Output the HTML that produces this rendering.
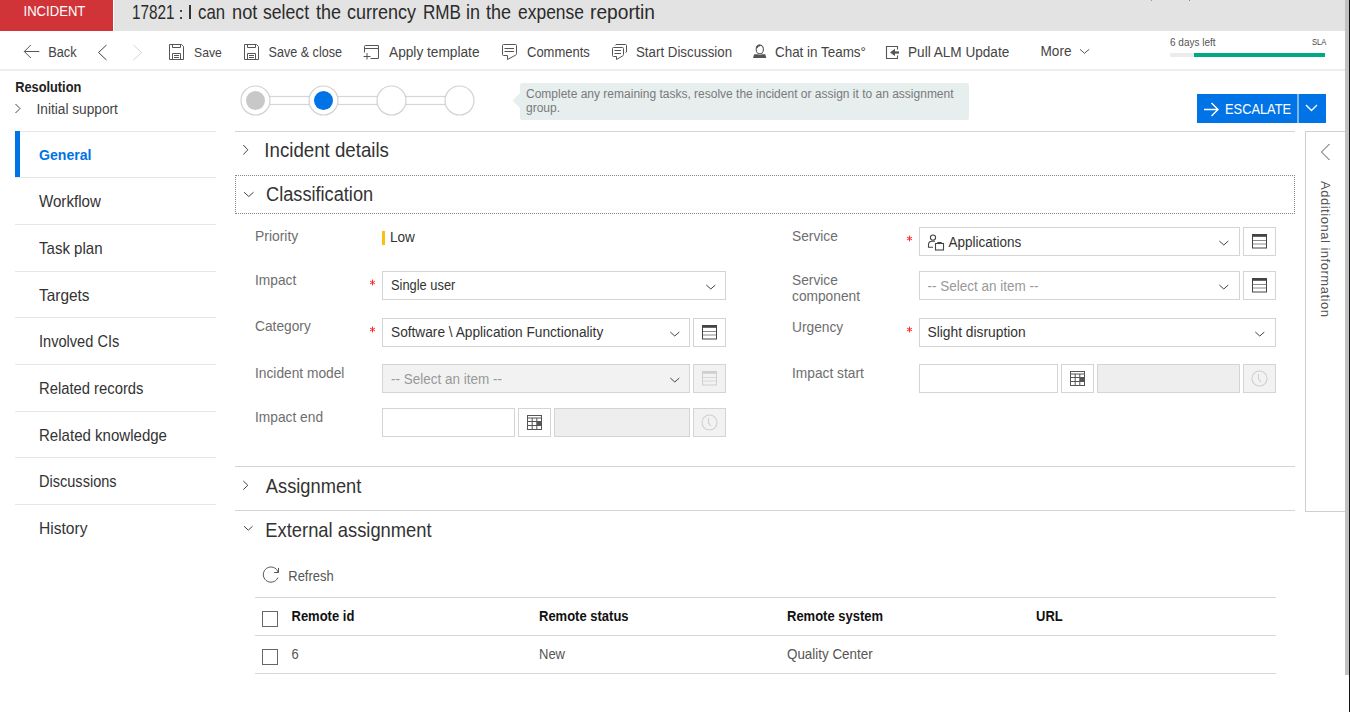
<!DOCTYPE html>
<html><head><meta charset="utf-8"><style>
html,body{margin:0;padding:0;background:#fff;width:1350px;height:712px;overflow:hidden;position:relative}
.t{position:absolute;white-space:nowrap;line-height:normal;font-family:'Liberation Sans', sans-serif}
svg{overflow:visible}
</style></head><body>
<div style="position:absolute;left:0px;top:0px;width:113px;height:31px;background:#d13438"></div>
<div style="position:absolute;left:114px;top:0px;width:1231px;height:31px;background:#e3e3e3"></div>
<div class="t" style="left:23.5px;top:4px;font-size:13.1px;color:#fff;font-weight:normal;transform:scaleY(1.1);transform-origin:0 11px;">INCIDENT</div>
<div class="t" style="left:132.40px;top:3px;font-size:18px;color:#2b2b2b;transform:scale(0.8503,1.1);transform-origin:0.00px 15px;">17821</div>
<div class="t" style="left:198.00px;top:3px;font-size:18px;color:#2b2b2b;transform:scale(0.9310,1.1);transform-origin:0.00px 15px;">can</div>
<div class="t" style="left:231.60px;top:3px;font-size:18px;color:#2b2b2b;transform:scale(1.0160,1.1);transform-origin:0.00px 15px;">not</div>
<div class="t" style="left:263.00px;top:3px;font-size:18px;color:#2b2b2b;transform:scale(0.9787,1.1);transform-origin:0.00px 15px;">select</div>
<div class="t" style="left:316.00px;top:3px;font-size:18px;color:#2b2b2b;transform:scale(1.0000,1.1);transform-origin:0.00px 15px;">the</div>
<div class="t" style="left:347.00px;top:3px;font-size:18px;color:#2b2b2b;transform:scale(1.0000,1.1);transform-origin:0.00px 15px;">currency</div>
<div class="t" style="left:423.00px;top:3px;font-size:18px;color:#2b2b2b;transform:scale(0.9500,1.1);transform-origin:0.00px 15px;">RMB</div>
<div class="t" style="left:466.00px;top:3px;font-size:18px;color:#2b2b2b;transform:scale(1.0000,1.1);transform-origin:0.00px 15px;">in</div>
<div class="t" style="left:486.00px;top:3px;font-size:18px;color:#2b2b2b;transform:scale(1.0000,1.1);transform-origin:0.00px 15px;">the</div>
<div class="t" style="left:518.00px;top:3px;font-size:18px;color:#2b2b2b;transform:scale(0.9692,1.1);transform-origin:0.00px 15px;">expense</div>
<div class="t" style="left:590.00px;top:3px;font-size:18px;color:#2b2b2b;transform:scale(1.0656,1.1);transform-origin:0.00px 15px;">reportin</div>
<div style="position:absolute;left:189px;top:5px;width:2px;height:14px;background:#333"></div>
<div style="position:absolute;left:180px;top:10px;width:2px;height:2px;background:#444"></div>
<div style="position:absolute;left:180px;top:17px;width:2px;height:2px;background:#444"></div>
<div style="position:absolute;left:1345px;top:0px;width:4px;height:675px;background:#c1c1c1"></div>
<div style="position:absolute;left:1349px;top:0px;width:1px;height:712px;background:#111"></div>
<div style="position:absolute;left:1151px;top:0px;width:1px;height:1px;background:#999"></div>
<div style="position:absolute;left:1189px;top:0px;width:1px;height:1px;background:#888"></div>
<div style="position:absolute;left:0px;top:69px;width:1345px;height:2px;background:#eeeeee"></div>
<svg style="position:absolute;left:23px;top:44px;" width="17" height="15" viewBox="0 0 17 15"><path d="M1.3 7.5 H16.3 M7.8 1 L1.3 7.5 L7.8 14" fill="none" stroke="#555" stroke-width="1"/></svg>
<div class="t" style="left:48.2px;top:45px;font-size:12.8px;color:#444;font-weight:normal;transform:scaleY(1.1);transform-origin:0 11px;">Back</div>
<svg style="position:absolute;left:97px;top:44px;" width="11" height="17" viewBox="0 0 11 17"><path d="M9.5 1 L1.5 8.5 L9.5 16" fill="none" stroke="#444" stroke-width="1"/></svg>
<svg style="position:absolute;left:132px;top:44px;" width="11" height="17" viewBox="0 0 11 17"><path d="M1.5 1 L9.5 8.5 L1.5 16" fill="none" stroke="#d4d4d4" stroke-width="1"/></svg>
<svg style="position:absolute;left:168px;top:44px;" width="17" height="17" viewBox="0 0 17 17"><path d="M1.5 0.5 H13.5 L15.5 2.5 V15.5 H1.5 Z" fill="none" stroke="#555" stroke-width="1"/><path d="M4.5 0.5 V3.5 H12.5 V0.5" fill="none" stroke="#555" stroke-width="1"/><path d="M4.5 15.5 V9.5 H12.5 V15.5 M6 11.5 H11 M6 13.5 H11" fill="none" stroke="#555" stroke-width="1"/></svg>
<div class="t" style="left:194px;top:46px;font-size:12.2px;color:#444;font-weight:normal;transform:scaleY(1.1);transform-origin:0 10px;">Save</div>
<svg style="position:absolute;left:243px;top:44px;" width="17" height="17" viewBox="0 0 17 17"><path d="M1.5 0.5 H13.5 L15.5 2.5 V15.5 H1.5 Z" fill="none" stroke="#555" stroke-width="1"/><path d="M4.5 0.5 V3.5 H12.5 V0.5" fill="none" stroke="#555" stroke-width="1"/><path d="M4.5 15.5 V9.5 H12.5 V15.5 M6 11.5 H11 M6 13.5 H11" fill="none" stroke="#555" stroke-width="1"/></svg>
<div class="t" style="left:268.5px;top:46px;font-size:12.6px;color:#444;font-weight:normal;transform:scaleY(1.1);transform-origin:0 10px;">Save &amp; close</div>
<svg style="position:absolute;left:363px;top:45px;" width="17" height="16" viewBox="0 0 17 16"><path d="M1.5 7.5 V1.5 Q1.5 0.5 2.5 0.5 H15.5 V13.5 H7.5" fill="none" stroke="#555" stroke-width="1"/><path d="M1.5 3.5 H15.5" stroke="#555" stroke-width="1"/><path d="M4 8 V14.5 M0.5 11.5 H7.5" stroke="#555" stroke-width="1"/></svg>
<div class="t" style="left:389px;top:45px;font-size:13.7px;color:#444;font-weight:normal;transform:scaleY(1.1);transform-origin:0 11px;">Apply template</div>
<svg style="position:absolute;left:501px;top:44px;" width="17" height="17" viewBox="0 0 17 17"><path d="M2.5 0.5 H14.5 Q15.5 0.5 15.5 1.5 V9.5 Q15.5 10.8 14.5 11.2 L6.5 15.5 V11.5 H2.5 Q1.5 11.5 1.5 10.5 V1.5 Q1.5 0.5 2.5 0.5 Z" fill="none" stroke="#555" stroke-width="1"/><path d="M3.5 4.5 H13 M3.5 7.5 H13" stroke="#555" stroke-width="1"/></svg>
<div class="t" style="left:527px;top:45px;font-size:13px;color:#444;font-weight:normal;transform:scaleY(1.1);transform-origin:0 11px;">Comments</div>
<svg style="position:absolute;left:611px;top:44px;" width="17" height="17" viewBox="0 0 17 17"><path d="M4 1.5 L5 0.5 H14.5 Q15.5 0.5 15.5 1.5 V8 L14.5 8.5" fill="none" stroke="#555" stroke-width="1"/><path d="M1.5 4.5 Q1.5 3.5 2.5 3.5 H11.5 Q12.5 3.5 12.5 4.5 V10.5 Q12.5 11.5 11.5 12 L5.5 15.5 V12.5 H2.5 Q1.5 12.5 1.5 11.5 Z" fill="none" stroke="#555" stroke-width="1"/><path d="M3.5 6.5 H10 M3.5 9.5 H10" stroke="#555" stroke-width="1"/></svg>
<div class="t" style="left:636px;top:45px;font-size:13.3px;color:#444;font-weight:normal;transform:scaleY(1.1);transform-origin:0 11px;">Start Discussion</div>
<svg style="position:absolute;left:752px;top:44px;" width="15" height="16" viewBox="0 0 15 16"><ellipse cx="7.8" cy="5.5" rx="3.6" ry="4.4" fill="none" stroke="#555" stroke-width="1.1"/><path d="M4.6 4 Q5.5 1.3 8 1.3" fill="none" stroke="#555" stroke-width="1.8"/><path d="M1 14 L2.2 10.3 H5.5 L7.8 11 L10 10.3 H13.3 L14.3 14 Z" fill="#555"/></svg>
<div class="t" style="left:775px;top:45px;font-size:13.43px;color:#444;font-weight:normal;transform:scaleY(1.1);transform-origin:0 11px;">Chat in Teams°</div>
<svg style="position:absolute;left:885px;top:45px;" width="16" height="15" viewBox="0 0 16 15"><path d="M12.5 4.5 V1.5 H1.5 V13.5 H12.5 V10.5" fill="none" stroke="#555" stroke-width="1.1"/><path d="M5 7.4 L10 3.8 V11 Z" fill="#555"/><rect x="9.5" y="6.4" width="4.5" height="2.2" fill="#555"/></svg>
<div class="t" style="left:908px;top:45px;font-size:13.6px;color:#444;font-weight:normal;transform:scaleY(1.1);transform-origin:0 11px;">Pull ALM Update</div>
<div class="t" style="left:1040.5px;top:44px;font-size:13.6px;color:#444;font-weight:normal;transform:scaleY(1.1);transform-origin:0 11px;">More</div>
<svg style="position:absolute;left:1079px;top:48px;" width="12" height="7" viewBox="0 0 12 7"><path d="M1 1.3 L5.5 5.3 L10.2 1.3" fill="none" stroke="#555" stroke-width="1"/></svg>
<div class="t" style="left:1170px;top:37px;font-size:10px;color:#555;font-weight:normal;transform:scaleY(1.1);transform-origin:0 8px;">6 days left</div>
<div class="t" style="left:1312px;top:38px;font-size:7.6px;color:#444;font-weight:normal;transform:scaleY(1.25);transform-origin:0 6px;">SLA</div>
<div style="position:absolute;left:1170px;top:53px;width:24px;height:4px;background:#ececec"></div>
<div style="position:absolute;left:1194px;top:53px;width:131px;height:4px;background:#01a982"></div>
<div class="t" style="left:15.2px;top:80px;font-size:12.8px;color:#222;font-weight:bold;transform:scaleY(1.1);transform-origin:0 11px;">Resolution</div>
<svg style="position:absolute;left:14px;top:103px;" width="8" height="11" viewBox="0 0 8 11"><path d="M1.5 1 L6 5.5 L1.5 10" fill="none" stroke="#444" stroke-width="1"/></svg>
<div class="t" style="left:36.5px;top:102px;font-size:13.7px;color:#444;font-weight:normal;transform:scaleY(1.1);transform-origin:0 11px;">Initial support</div>
<div style="position:absolute;left:15px;top:131px;width:201px;height:1px;background:#e6e6e6"></div>
<div style="position:absolute;left:15px;top:177px;width:201px;height:1px;background:#e6e6e6"></div>
<div style="position:absolute;left:15px;top:224px;width:201px;height:1px;background:#e6e6e6"></div>
<div style="position:absolute;left:15px;top:271px;width:201px;height:1px;background:#e6e6e6"></div>
<div style="position:absolute;left:15px;top:317px;width:201px;height:1px;background:#e6e6e6"></div>
<div style="position:absolute;left:15px;top:364px;width:201px;height:1px;background:#e6e6e6"></div>
<div style="position:absolute;left:15px;top:411px;width:201px;height:1px;background:#e6e6e6"></div>
<div style="position:absolute;left:15px;top:457px;width:201px;height:1px;background:#e6e6e6"></div>
<div style="position:absolute;left:15px;top:504px;width:201px;height:1px;background:#e6e6e6"></div>
<div style="position:absolute;left:15px;top:131px;width:5px;height:46px;background:#0073e7"></div>
<div class="t" style="left:39px;top:147px;font-size:14.1px;color:#0073e7;font-weight:bold;transform:scaleY(1.06);transform-origin:0 12px;">General</div>
<div class="t" style="left:39px;top:193px;font-size:15.1px;color:#333;font-weight:normal;transform:scaleY(1.07);transform-origin:0 13px;">Workflow</div>
<div class="t" style="left:39px;top:240px;font-size:15.05px;color:#333;font-weight:normal;transform:scaleY(1.07);transform-origin:0 13px;">Task plan</div>
<div class="t" style="left:39px;top:287px;font-size:15.4px;color:#333;font-weight:normal;transform:scaleY(1.07);transform-origin:0 13px;">Targets</div>
<div class="t" style="left:39px;top:334px;font-size:14.6px;color:#333;font-weight:normal;transform:scaleY(1.07);transform-origin:0 12px;">Involved CIs</div>
<div class="t" style="left:39px;top:381px;font-size:14.8px;color:#333;font-weight:normal;transform:scaleY(1.07);transform-origin:0 12px;">Related records</div>
<div class="t" style="left:39px;top:427px;font-size:15.05px;color:#333;font-weight:normal;transform:scaleY(1.07);transform-origin:0 13px;">Related knowledge</div>
<div class="t" style="left:39px;top:474px;font-size:14.55px;color:#333;font-weight:normal;transform:scaleY(1.07);transform-origin:0 12px;">Discussions</div>
<div class="t" style="left:39px;top:520px;font-size:15.6px;color:#333;font-weight:normal;transform:scaleY(1.07);transform-origin:0 13px;">History</div>
<svg style="position:absolute;left:241px;top:96px;" width="240" height="11" viewBox="0 0 240 11"><rect x="15" y="0.5" width="203" height="8" fill="#fff" stroke="#d6d6d6" stroke-width="1.2"/></svg>
<svg style="position:absolute;left:240.0px;top:85px;" width="31" height="31" viewBox="0 0 31 31"><circle cx="15.5" cy="15.5" r="14.5" fill="#fff" stroke="#d2d2d2" stroke-width="1.2"/><circle cx="15.5" cy="15.5" r="9.5" fill="#c8c8c8"/></svg>
<svg style="position:absolute;left:308.0px;top:85px;" width="31" height="31" viewBox="0 0 31 31"><circle cx="15.5" cy="15.5" r="14.5" fill="#fff" stroke="#d2d2d2" stroke-width="1.2"/><circle cx="15.5" cy="15.5" r="9.5" fill="#0073e7"/></svg>
<svg style="position:absolute;left:376.0px;top:85px;" width="31" height="31" viewBox="0 0 31 31"><circle cx="15.5" cy="15.5" r="14.5" fill="#fff" stroke="#d2d2d2" stroke-width="1.2"/></svg>
<svg style="position:absolute;left:444.0px;top:85px;" width="31" height="31" viewBox="0 0 31 31"><circle cx="15.5" cy="15.5" r="14.5" fill="#fff" stroke="#d2d2d2" stroke-width="1.2"/></svg>
<div style="position:absolute;left:520px;top:83px;width:449px;height:37px;background:#e6eeee;border-radius:2px"></div>
<svg style="position:absolute;left:512px;top:92px;" width="9" height="17" viewBox="0 0 9 17"><path d="M9 0 L0.5 8.5 L9 17 Z" fill="#e6eeee"/></svg>
<div class="t" style="left:526px;top:87px;font-size:12.0px;color:#7a7a7a;font-weight:normal;">Complete any remaining tasks, resolve the incident or assign it to an assignment</div>
<div class="t" style="left:526px;top:101px;font-size:12.0px;color:#7a7a7a;font-weight:normal;">group.</div>
<div style="position:absolute;left:1197px;top:94px;width:100px;height:29px;background:#0073e7"></div>
<div style="position:absolute;left:1299px;top:94px;width:27px;height:29px;background:#0073e7"></div>
<div style="position:absolute;left:1297px;top:94px;width:2px;height:29px;background:#7fb5f0"></div>
<svg style="position:absolute;left:1203px;top:102px;" width="16" height="15" viewBox="0 0 16 15"><path d="M1 7.5 H15 M8.5 1 L15 7.5 L8.5 14" fill="none" stroke="#fff" stroke-width="1.4"/></svg>
<div class="t" style="left:1225px;top:102px;font-size:12.85px;color:#fff;font-weight:normal;transform:scaleY(1.14);transform-origin:0 11px;">ESCALATE</div>
<svg style="position:absolute;left:1305px;top:104px;" width="13" height="8" viewBox="0 0 13 8"><path d="M1 1 L6.5 6.5 L12 1" fill="none" stroke="#fff" stroke-width="1.4"/></svg>
<div style="position:absolute;left:235px;top:131px;width:1060px;height:1px;background:#d4d4d4"></div>
<svg style="position:absolute;left:242px;top:144px;" width="8" height="12" viewBox="0 0 8 12"><path d="M1.3 1 L5.8 5.8 L1.3 10.6" fill="none" stroke="#444" stroke-width="1"/></svg>
<div class="t" style="left:264.3px;top:140px;font-size:18.7px;color:#333;font-weight:normal;transform:scaleY(1.1);transform-origin:0 16px;">Incident details</div>
<div style="position:absolute;left:235px;top:175px;width:1060px;height:39px;outline:1px dotted #888;outline-offset:-1px"></div>
<svg style="position:absolute;left:243px;top:191px;" width="12" height="8" viewBox="0 0 12 8"><path d="M1 1.2 L5.8 5.5 L10.6 1.2" fill="none" stroke="#444" stroke-width="1"/></svg>
<div class="t" style="left:266px;top:185px;font-size:18.2px;color:#333;font-weight:normal;transform:scaleY(1.1);transform-origin:0 15px;">Classification</div>
<div class="t" style="left:255px;top:228px;font-size:13.9px;color:#6e6e6e;font-weight:normal;transform:scaleY(1.1);transform-origin:0 12px;">Priority</div>
<div style="position:absolute;left:382px;top:231px;width:3px;height:14px;background:#fbbf14"></div>
<div class="t" style="left:390px;top:230px;font-size:13.6px;color:#333;font-weight:normal;transform:scaleY(1.1);transform-origin:0 11px;">Low</div>
<div class="t" style="left:255px;top:273px;font-size:13.75px;color:#6e6e6e;font-weight:normal;transform:scaleY(1.1);transform-origin:0 11px;">Impact</div>
<svg style="position:absolute;left:368.0px;top:278.0px;" width="9" height="9" viewBox="0 0 9 9"><path d="M4.5 1.6 V7.4 M2 3.05 L7 5.95 M2 5.95 L7 3.05" stroke="#ff2020" stroke-width="0.95"/></svg>
<div style="position:absolute;left:382px;top:271px;width:344px;height:29px;background:#fff;border:1px solid #d4d4d4;box-sizing:border-box"></div>
<div class="t" style="left:391px;top:278px;font-size:12.86px;color:#333;font-weight:normal;transform:scaleY(1.1);transform-origin:0 11px;">Single user</div>
<svg style="position:absolute;left:705px;top:284px;" width="12" height="7" viewBox="0 0 12 7"><path d="M1.3 1 L5.8 5 L10.3 1" fill="none" stroke="#444" stroke-width="1"/></svg>
<div class="t" style="left:255px;top:319px;font-size:13.75px;color:#6e6e6e;font-weight:normal;transform:scaleY(1.1);transform-origin:0 11px;">Category</div>
<svg style="position:absolute;left:368.0px;top:325.0px;" width="9" height="9" viewBox="0 0 9 9"><path d="M4.5 1.6 V7.4 M2 3.05 L7 5.95 M2 5.95 L7 3.05" stroke="#ff2020" stroke-width="0.95"/></svg>
<div style="position:absolute;left:382px;top:318px;width:308px;height:29px;background:#fff;border:1px solid #d4d4d4;box-sizing:border-box"></div>
<div class="t" style="left:391px;top:325px;font-size:13.7px;color:#333;font-weight:normal;transform:scaleY(1.1);transform-origin:0 11px;">Software \ Application Functionality</div>
<svg style="position:absolute;left:669px;top:331px;" width="12" height="7" viewBox="0 0 12 7"><path d="M1.3 1 L5.8 5 L10.3 1" fill="none" stroke="#444" stroke-width="1"/></svg>
<div style="position:absolute;left:693px;top:318px;width:33px;height:29px;background:#fff;border:1px solid #d4d4d4;box-sizing:border-box"></div>
<svg style="position:absolute;left:701px;top:324px;" width="17" height="17" viewBox="0 0 17 17"><rect x="1.5" y="1.5" width="14" height="13.5" fill="none" stroke="#444" stroke-width="1"/><rect x="1" y="1" width="15" height="2.8" fill="#444"/><path d="M2 7.5 H15 M2 11 H15" stroke="#8a8a8a" stroke-width="1"/></svg>
<div class="t" style="left:255px;top:366px;font-size:13.75px;color:#6e6e6e;font-weight:normal;transform:scaleY(1.1);transform-origin:0 11px;">Incident model</div>
<div style="position:absolute;left:382px;top:364px;width:308px;height:29px;background:#f2f2f2;border:1px solid #d4d4d4;box-sizing:border-box"></div>
<div class="t" style="left:391px;top:372px;font-size:13.5px;color:#999;font-weight:normal;transform:scaleY(1.1);transform-origin:0 11px;">-- Select an item --</div>
<svg style="position:absolute;left:669px;top:377px;" width="12" height="7" viewBox="0 0 12 7"><path d="M1.3 1 L5.8 5 L10.3 1" fill="none" stroke="#444" stroke-width="1"/></svg>
<div style="position:absolute;left:693px;top:364px;width:33px;height:29px;background:#f2f2f2;border:1px solid #d4d4d4;box-sizing:border-box"></div>
<svg style="position:absolute;left:701px;top:370px;" width="17" height="17" viewBox="0 0 17 17"><rect x="1.5" y="1.5" width="14" height="13.5" fill="none" stroke="#cfcfcf" stroke-width="1"/><rect x="1" y="1" width="15" height="2.8" fill="#cfcfcf"/><path d="M2 7.5 H15 M2 11 H15" stroke="#d8d8d8" stroke-width="1"/></svg>
<div class="t" style="left:255px;top:410px;font-size:13.75px;color:#6e6e6e;font-weight:normal;transform:scaleY(1.1);transform-origin:0 11px;">Impact end</div>
<div style="position:absolute;left:382px;top:408px;width:133px;height:29px;background:#fff;border:1px solid #d4d4d4;box-sizing:border-box"></div>
<div style="position:absolute;left:518px;top:408px;width:33px;height:29px;background:#fff;border:1px solid #d4d4d4;box-sizing:border-box"></div>
<svg style="position:absolute;left:526px;top:414px;" width="17" height="17" viewBox="0 0 17 17"><rect x="1.5" y="1.5" width="14" height="14" fill="none" stroke="#555" stroke-width="1"/><path d="M1.5 4 H15.5 M1.5 7.5 H15.5 M1.5 11.5 H15.5 M6.2 4 V15.5 M10.8 4 V15.5" stroke="#555" stroke-width="1"/><rect x="10.8" y="7.5" width="4.7" height="4" fill="#555"/></svg>
<div style="position:absolute;left:554px;top:408px;width:136px;height:29px;background:#eeeeee;border:1px solid #d4d4d4;box-sizing:border-box"></div>
<div style="position:absolute;left:693px;top:408px;width:33px;height:29px;background:#f2f2f2;border:1px solid #d4d4d4;box-sizing:border-box"></div>
<svg style="position:absolute;left:701px;top:414px;" width="17" height="17" viewBox="0 0 17 17"><circle cx="8.5" cy="8.5" r="7.5" fill="none" stroke="#d0d0d0" stroke-width="1.1"/><path d="M7.5 4 V9 L10 12" fill="none" stroke="#d0d0d0" stroke-width="1.1"/></svg>
<div class="t" style="left:792px;top:229px;font-size:13.75px;color:#6e6e6e;font-weight:normal;transform:scaleY(1.1);transform-origin:0 11px;">Service</div>
<svg style="position:absolute;left:905.0px;top:234.0px;" width="9" height="9" viewBox="0 0 9 9"><path d="M4.5 1.6 V7.4 M2 3.05 L7 5.95 M2 5.95 L7 3.05" stroke="#ff2020" stroke-width="0.95"/></svg>
<div style="position:absolute;left:919px;top:227px;width:321px;height:29px;background:#fff;border:1px solid #d4d4d4;box-sizing:border-box"></div>
<svg style="position:absolute;left:926px;top:233px;" width="19" height="19" viewBox="0 0 19 19"><circle cx="7" cy="4.6" r="2.6" fill="none" stroke="#444" stroke-width="1.1"/><path d="M9 8.3 H6 Q2.5 8.3 2.5 11.8 V14.3 H7" fill="none" stroke="#444" stroke-width="1.1"/><rect x="9.5" y="10.5" width="8" height="6.5" fill="none" stroke="#444" stroke-width="1.1"/><path d="M11.5 10.5 V9.5 H15.5 V10.5" fill="none" stroke="#444" stroke-width="1"/></svg>
<div class="t" style="left:948.5px;top:235px;font-size:13.5px;color:#333;font-weight:normal;transform:scaleY(1.1);transform-origin:0 11px;">Applications</div>
<svg style="position:absolute;left:1218px;top:240px;" width="12" height="7" viewBox="0 0 12 7"><path d="M1.3 1 L5.8 5 L10.3 1" fill="none" stroke="#444" stroke-width="1"/></svg>
<div style="position:absolute;left:1243px;top:227px;width:33px;height:29px;background:#fff;border:1px solid #d4d4d4;box-sizing:border-box"></div>
<svg style="position:absolute;left:1251px;top:233px;" width="17" height="17" viewBox="0 0 17 17"><rect x="1.5" y="1.5" width="14" height="13.5" fill="none" stroke="#444" stroke-width="1"/><rect x="1" y="1" width="15" height="2.8" fill="#444"/><path d="M2 7.5 H15 M2 11 H15" stroke="#8a8a8a" stroke-width="1"/></svg>
<div class="t" style="left:792px;top:273px;font-size:13.75px;color:#6e6e6e;font-weight:normal;transform:scaleY(1.1);transform-origin:0 11px;">Service</div>
<div class="t" style="left:792px;top:289px;font-size:13.75px;color:#6e6e6e;font-weight:normal;transform:scaleY(1.1);transform-origin:0 11px;">component</div>
<div style="position:absolute;left:919px;top:271px;width:321px;height:29px;background:#fff;border:1px solid #d4d4d4;box-sizing:border-box"></div>
<div class="t" style="left:927.5px;top:279px;font-size:13.5px;color:#999;font-weight:normal;transform:scaleY(1.1);transform-origin:0 11px;">-- Select an item --</div>
<svg style="position:absolute;left:1218px;top:284px;" width="12" height="7" viewBox="0 0 12 7"><path d="M1.3 1 L5.8 5 L10.3 1" fill="none" stroke="#444" stroke-width="1"/></svg>
<div style="position:absolute;left:1243px;top:271px;width:33px;height:29px;background:#fff;border:1px solid #d4d4d4;box-sizing:border-box"></div>
<svg style="position:absolute;left:1251px;top:277px;" width="17" height="17" viewBox="0 0 17 17"><rect x="1.5" y="1.5" width="14" height="13.5" fill="none" stroke="#444" stroke-width="1"/><rect x="1" y="1" width="15" height="2.8" fill="#444"/><path d="M2 7.5 H15 M2 11 H15" stroke="#8a8a8a" stroke-width="1"/></svg>
<div class="t" style="left:792px;top:320px;font-size:13.75px;color:#6e6e6e;font-weight:normal;transform:scaleY(1.1);transform-origin:0 11px;">Urgency</div>
<svg style="position:absolute;left:905.0px;top:325.0px;" width="9" height="9" viewBox="0 0 9 9"><path d="M4.5 1.6 V7.4 M2 3.05 L7 5.95 M2 5.95 L7 3.05" stroke="#ff2020" stroke-width="0.95"/></svg>
<div style="position:absolute;left:919px;top:318px;width:357px;height:29px;background:#fff;border:1px solid #d4d4d4;box-sizing:border-box"></div>
<div class="t" style="left:927.5px;top:325px;font-size:13.8px;color:#333;font-weight:normal;transform:scaleY(1.1);transform-origin:0 11px;">Slight disruption</div>
<svg style="position:absolute;left:1254px;top:331px;" width="12" height="7" viewBox="0 0 12 7"><path d="M1.3 1 L5.8 5 L10.3 1" fill="none" stroke="#444" stroke-width="1"/></svg>
<div class="t" style="left:792px;top:366px;font-size:13.75px;color:#6e6e6e;font-weight:normal;transform:scaleY(1.1);transform-origin:0 11px;">Impact start</div>
<div style="position:absolute;left:919px;top:364px;width:139px;height:29px;background:#fff;border:1px solid #d4d4d4;box-sizing:border-box"></div>
<div style="position:absolute;left:1061px;top:364px;width:33px;height:29px;background:#fff;border:1px solid #d4d4d4;box-sizing:border-box"></div>
<svg style="position:absolute;left:1069px;top:370px;" width="17" height="17" viewBox="0 0 17 17"><rect x="1.5" y="1.5" width="14" height="14" fill="none" stroke="#555" stroke-width="1"/><path d="M1.5 4 H15.5 M1.5 7.5 H15.5 M1.5 11.5 H15.5 M6.2 4 V15.5 M10.8 4 V15.5" stroke="#555" stroke-width="1"/><rect x="10.8" y="7.5" width="4.7" height="4" fill="#555"/></svg>
<div style="position:absolute;left:1097px;top:364px;width:143px;height:29px;background:#eeeeee;border:1px solid #d4d4d4;box-sizing:border-box"></div>
<div style="position:absolute;left:1243px;top:364px;width:33px;height:29px;background:#f2f2f2;border:1px solid #d4d4d4;box-sizing:border-box"></div>
<svg style="position:absolute;left:1251px;top:370px;" width="17" height="17" viewBox="0 0 17 17"><circle cx="8.5" cy="8.5" r="7.5" fill="none" stroke="#d0d0d0" stroke-width="1.1"/><path d="M7.5 4 V9 L10 12" fill="none" stroke="#d0d0d0" stroke-width="1.1"/></svg>
<div style="position:absolute;left:235px;top:466px;width:1060px;height:1px;background:#d4d4d4"></div>
<svg style="position:absolute;left:242px;top:480px;" width="8" height="12" viewBox="0 0 8 12"><path d="M1.3 1 L5.8 5.3 L1.3 9.6" fill="none" stroke="#444" stroke-width="1"/></svg>
<div class="t" style="left:265.8px;top:476px;font-size:18.3px;color:#333;font-weight:normal;transform:scaleY(1.1);transform-origin:0 16px;">Assignment</div>
<div style="position:absolute;left:235px;top:510px;width:1060px;height:1px;background:#d4d4d4"></div>
<svg style="position:absolute;left:243px;top:525px;" width="12" height="8" viewBox="0 0 12 8"><path d="M1 1.2 L5.3 5.2 L9.6 1.2" fill="none" stroke="#444" stroke-width="1"/></svg>
<div class="t" style="left:265.3px;top:520px;font-size:18.37px;color:#333;font-weight:normal;transform:scaleY(1.1);transform-origin:0 16px;">External assignment</div>
<svg style="position:absolute;left:262px;top:566px;" width="18" height="18" viewBox="0 0 18 18"><path d="M16.2 6.4 A7.6 7.6 0 1 0 15.9 11.6" fill="none" stroke="#555" stroke-width="1"/><path d="M12.2 6.5 H16.5 V2" fill="none" stroke="#555" stroke-width="1"/></svg>
<div class="t" style="left:288.3px;top:569px;font-size:12.95px;color:#555;font-weight:normal;transform:scaleY(1.1);transform-origin:0 11px;">Refresh</div>
<div style="position:absolute;left:255px;top:597px;width:1021px;height:1px;background:#d8d8d8"></div>
<div style="position:absolute;left:255px;top:635px;width:1021px;height:1px;background:#d8d8d8"></div>
<div style="position:absolute;left:255px;top:673px;width:1021px;height:1px;background:#d8d8d8"></div>
<div style="position:absolute;left:262px;top:611px;width:16px;height:16px;border:1px solid #666;box-sizing:border-box;background:#fff"></div>
<div class="t" style="left:291.5px;top:609px;font-size:13.0px;color:#111;font-weight:bold;transform:scaleY(1.1);transform-origin:0 11px;">Remote id</div>
<div class="t" style="left:539px;top:609px;font-size:13.0px;color:#111;font-weight:bold;transform:scaleY(1.1);transform-origin:0 11px;">Remote status</div>
<div class="t" style="left:787px;top:609px;font-size:13.0px;color:#111;font-weight:bold;transform:scaleY(1.1);transform-origin:0 11px;">Remote system</div>
<div class="t" style="left:1036px;top:609px;font-size:13.0px;color:#111;font-weight:bold;transform:scaleY(1.1);transform-origin:0 11px;">URL</div>
<div style="position:absolute;left:262px;top:649px;width:16px;height:16px;border:1px solid #666;box-sizing:border-box;background:#fff"></div>
<div class="t" style="left:291.5px;top:647px;font-size:13px;color:#555;font-weight:normal;transform:scaleY(1.1);transform-origin:0 11px;">6</div>
<div class="t" style="left:539px;top:647px;font-size:13px;color:#555;font-weight:normal;transform:scaleY(1.1);transform-origin:0 11px;">New</div>
<div class="t" style="left:787px;top:647px;font-size:13.4px;color:#555;font-weight:normal;transform:scaleY(1.1);transform-origin:0 11px;">Quality Center</div>
<div style="position:absolute;left:1305px;top:131px;width:40px;height:381px;border:1px solid #cfcfcf;border-right:none;box-sizing:border-box;background:#fff"></div>
<svg style="position:absolute;left:1320px;top:143px;" width="11" height="18" viewBox="0 0 11 18"><path d="M9.5 1 L1.5 9 L9.5 17" fill="none" stroke="#555" stroke-width="1"/></svg>
<div class="t" style="left:1320px;top:181px;font-size:13px;letter-spacing:0.52px;color:#555;transform-origin:0 0;transform:translate(13px,0) rotate(90deg);">Additional information</div>
</body></html>
